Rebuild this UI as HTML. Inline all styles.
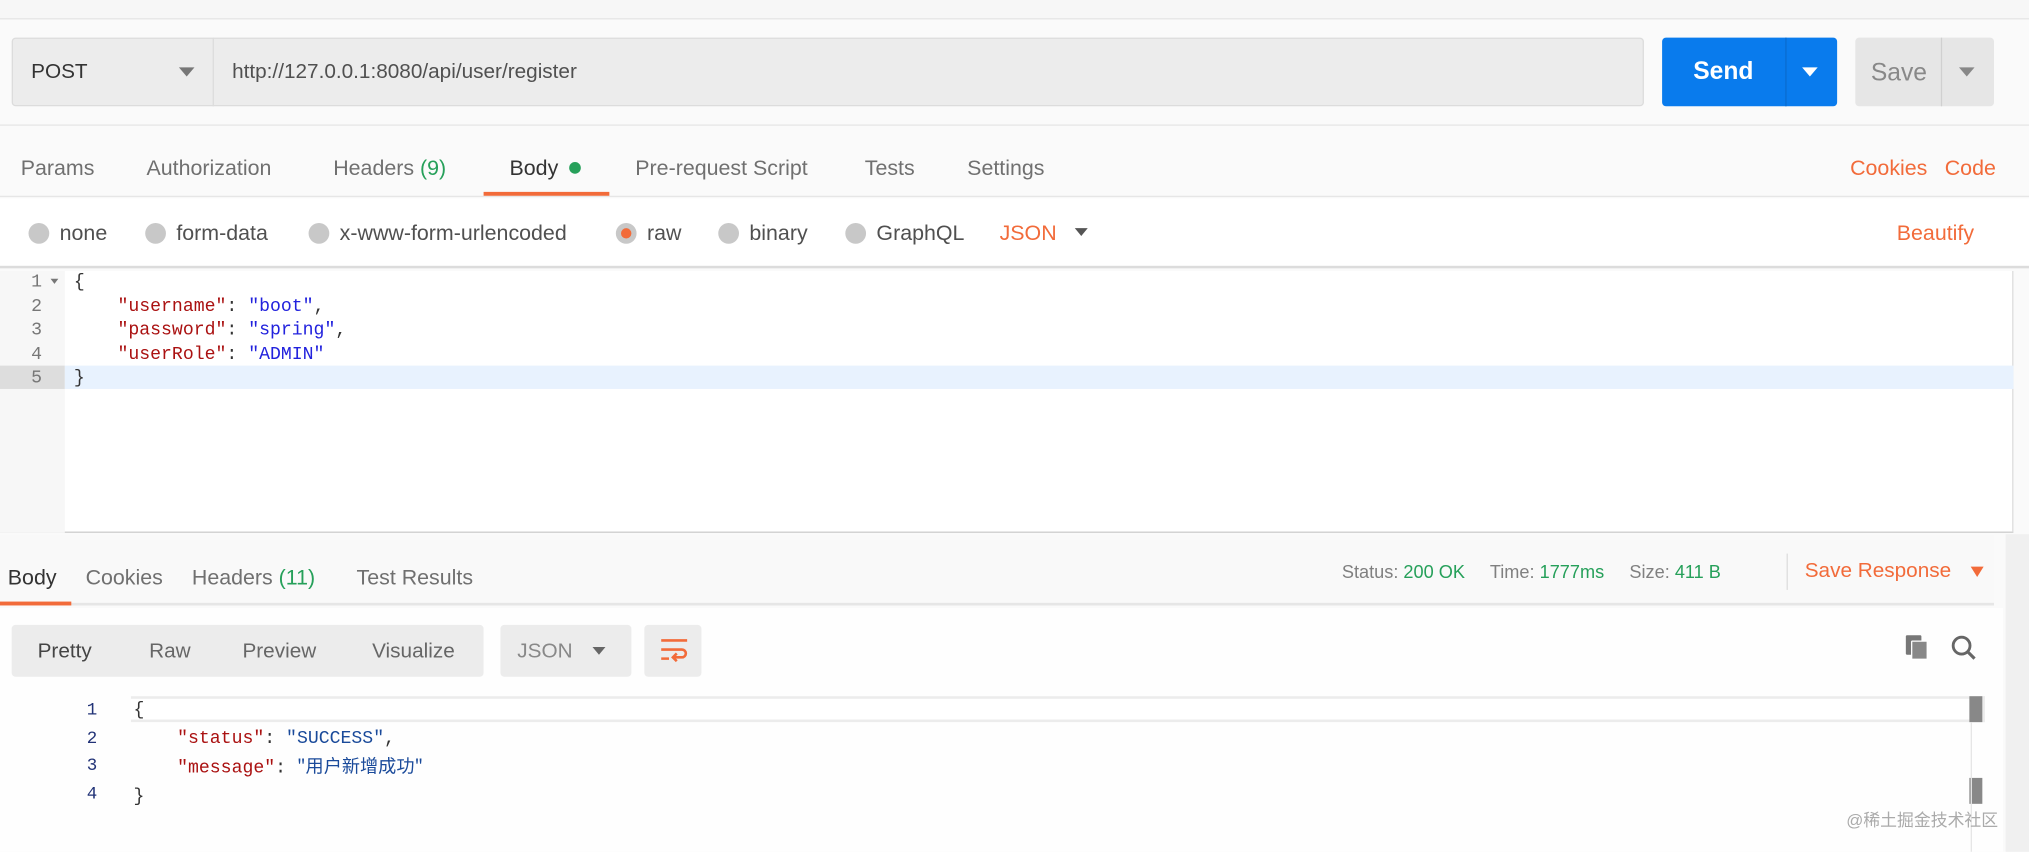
<!DOCTYPE html>
<html><head><meta charset="utf-8"><style>
*{margin:0;padding:0;box-sizing:border-box}
html,body{width:2029px;height:850px;overflow:hidden;background:#fff}
#w{position:absolute;left:0;top:0;width:1565px;height:657px;transform:scale(1.29649);transform-origin:0 0;font-family:"Liberation Sans","Noto Sans CJK SC",sans-serif;color:#505050;background:#fafafa}
.a{position:absolute;white-space:nowrap}
.tab{font-size:16.5px;color:#707070;top:121px}
.rad{font-size:16.5px;color:#505050;top:171px}
.dot{position:absolute;width:16px;height:16px;border-radius:50%;background:#c8c8c8;top:172px}
.mono{font-family:"Liberation Mono","DejaVu Sans Mono",monospace;font-size:14px}
.k{color:#a11}.s{color:#22d}
.ln{color:#777;font-family:"Liberation Mono",monospace;font-size:14px}
</style></head><body><div id="w">
<div class="a" style="left:0;top:0;width:1565px;height:15px;background:#f7f7f7;border-bottom:1px solid #e6e6e6"></div>
<div class="a" style="left:0;top:16px;width:1565px;height:81px;background:#fafafa;border-bottom:1px solid #e6e6e6"></div>
<div class="a" style="left:9px;top:29px;width:1259px;height:53px;background:#ececec;border:1px solid #dcdcdc;border-radius:3px"></div>
<div class="a" style="left:164px;top:29px;width:1px;height:53px;background:#dcdcdc"></div>
<div class="a" style="left:24px;top:47px;font-size:16px;color:#333">POST</div>
<div class="a" style="left:138px;top:52px;border-left:6px solid transparent;border-right:6px solid transparent;border-top:7px solid #777"></div>
<div class="a" style="left:179px;top:47px;font-size:16px;color:#505050">http://127.0.0.1:8080/api/user/register</div>
<div class="a" style="left:1282px;top:29px;width:135px;height:53px;background:#097bed;border-radius:3px"></div>
<div class="a" style="left:1377px;top:29px;width:1px;height:53px;background:#0a6cd0"></div>
<div class="a" style="left:1306px;top:45px;font-size:19px;font-weight:bold;color:#fff">Send</div>
<div class="a" style="left:1390px;top:52px;border-left:6px solid transparent;border-right:6px solid transparent;border-top:7px solid #fff"></div>
<div class="a" style="left:1431px;top:29px;width:107px;height:53px;background:#e6e6e6;border-radius:3px"></div>
<div class="a" style="left:1497px;top:29px;width:1px;height:53px;background:#d0d0d0"></div>
<div class="a" style="left:1443px;top:46px;font-size:19px;color:#888">Save</div>
<div class="a" style="left:1511px;top:52px;border-left:6px solid transparent;border-right:6px solid transparent;border-top:7px solid #888"></div>

<div class="a" style="left:0;top:98px;width:1565px;height:54px;background:#fafafa;border-bottom:1px solid #e6e6e6"></div>
<div class="a tab" style="left:16px">Params</div>
<div class="a tab" style="left:113px">Authorization</div>
<div class="a tab" style="left:257px">Headers <span style="color:#26a05a">(9)</span></div>
<div class="a tab" style="left:393px;color:#333">Body</div>
<div class="a" style="left:439px;top:125px;width:9px;height:9px;border-radius:50%;background:#26a05a"></div>
<div class="a" style="left:373px;top:148px;width:97px;height:3px;background:#f26b3a"></div>
<div class="a tab" style="left:490px">Pre-request Script</div>
<div class="a tab" style="left:667px">Tests</div>
<div class="a tab" style="left:746px">Settings</div>
<div class="a tab" style="left:1427px;color:#f26b3a">Cookies</div>
<div class="a tab" style="left:1500px;color:#f26b3a">Code</div>

<div class="a" style="left:0;top:153px;width:1565px;height:54px;background:#fff;border-bottom:2px solid #dcdcdc"></div>
<div class="dot" style="left:22px"></div><div class="a rad" style="left:46px">none</div>
<div class="dot" style="left:112px"></div><div class="a rad" style="left:136px">form-data</div>
<div class="dot" style="left:238px"></div><div class="a rad" style="left:262px">x-www-form-urlencoded</div>
<div class="dot" style="left:475px"></div><div class="a" style="left:479px;top:176px;width:8px;height:8px;border-radius:50%;background:#f26b3a"></div><div class="a rad" style="left:499px">raw</div>
<div class="dot" style="left:554px"></div><div class="a rad" style="left:578px">binary</div>
<div class="dot" style="left:652px"></div><div class="a rad" style="left:676px">GraphQL</div>
<div class="a rad" style="left:771px;color:#f26b3a">JSON</div>
<div class="a" style="left:829px;top:176px;border-left:5px solid transparent;border-right:5px solid transparent;border-top:6px solid #555"></div>
<div class="a rad" style="left:1463px;color:#f26b3a">Beautify</div>

<div class="a" style="left:0;top:209px;width:1553px;height:202px;background:#fff;border-right:1px solid #ddd;border-bottom:1px solid #ccc"></div>
<div class="a" style="left:0;top:209px;width:50px;height:202px;background:#f7f7f7"></div>
<div class="a" style="left:0;top:282px;width:50px;height:18px;background:#ddd"></div>
<div class="a" style="left:50px;top:282px;width:1503px;height:18px;background:#e8f2fe"></div>
<div class="a ln" style="left:24px;top:209px;line-height:18.5px">1<br>2<br>3<br>4<br>5</div>
<div class="a" style="left:39px;top:215px;border-left:3px solid transparent;border-right:3px solid transparent;border-top:4px solid #777"></div>
<div class="a mono" style="left:57px;top:209px;line-height:18.5px;color:#333">{<br>&nbsp;&nbsp;&nbsp;&nbsp;<span class="k">"username"</span>: <span class="s">"boot"</span>,<br>&nbsp;&nbsp;&nbsp;&nbsp;<span class="k">"password"</span>: <span class="s">"spring"</span>,<br>&nbsp;&nbsp;&nbsp;&nbsp;<span class="k">"userRole"</span>: <span class="s">"ADMIN"</span><br>}</div>

<div class="a" style="left:0;top:412px;width:1538px;height:55px;background:#f9f9f9;border-bottom:2px solid #e6e6e6"></div>
<div class="a tab" style="left:6px;top:437px;color:#333">Body</div>
<div class="a" style="left:0;top:464px;width:55px;height:3px;background:#f26b3a"></div>
<div class="a tab" style="left:66px;top:437px">Cookies</div>
<div class="a tab" style="left:148px;top:437px">Headers <span style="color:#26a05a">(11)</span></div>
<div class="a tab" style="left:275px;top:437px">Test Results</div>
<div class="a" style="left:1035px;top:433px;font-size:14px;color:#808080">Status: <span style="color:#26a05a">200 OK</span>&nbsp;&nbsp;&nbsp;&nbsp; Time: <span style="color:#26a05a">1777ms</span>&nbsp;&nbsp;&nbsp;&nbsp; Size: <span style="color:#26a05a">411 B</span></div>
<div class="a" style="left:1378px;top:427px;width:1px;height:28px;background:#ddd"></div>
<div class="a" style="left:1392px;top:432px;font-size:16px;color:#f26b3a">Save Response</div>
<div class="a" style="left:1520px;top:437px;border-left:5px solid transparent;border-right:5px solid transparent;border-top:8px solid #f26b3a"></div>

<div class="a" style="left:0;top:469px;width:1545px;height:188px;background:#fefefe"></div>
<div class="a" style="left:9px;top:482px;width:364px;height:40px;background:#ececec;border-radius:3px"></div>
<div class="a" style="left:29px;top:494px;font-size:16px;color:#444">Pretty</div>
<div class="a" style="left:115px;top:494px;font-size:16px;color:#666">Raw</div>
<div class="a" style="left:187px;top:494px;font-size:16px;color:#666">Preview</div>
<div class="a" style="left:287px;top:494px;font-size:16px;color:#666">Visualize</div>
<div class="a" style="left:386px;top:482px;width:101px;height:40px;background:#ececec;border-radius:3px"></div>
<div class="a" style="left:399px;top:494px;font-size:16px;color:#888">JSON</div>
<div class="a" style="left:457px;top:499px;border-left:5px solid transparent;border-right:5px solid transparent;border-top:6px solid #666"></div>
<div class="a" style="left:497px;top:482px;width:44px;height:40px;background:#ececec;border-radius:3px"></div>
<svg class="a" style="left:508px;top:491px" width="24" height="22" viewBox="0 0 24 22"><g stroke="#f26b3a" stroke-width="2" fill="none"><path d="M2 3h20M2 10h16a3 3 0 0 1 0 6h-6M2 17h6"/><path d="M14 13l-3 3 3 3"/></g></svg>
<div class="a" style="left:1470px;top:490px;width:12px;height:15px;background:#777;border-radius:1px"></div>
<div class="a" style="left:1474px;top:494px;width:13px;height:15px;background:#888;border-radius:1px;border:1px solid #fff"></div>
<svg class="a" style="left:1505px;top:490px" width="20" height="20" viewBox="0 0 20 20"><circle cx="8" cy="8" r="6.5" stroke="#666" stroke-width="2.2" fill="none"/><path d="M13 13l5 5" stroke="#666" stroke-width="2.4"/></svg>

<div class="a" style="left:101px;top:537px;width:1430px;height:20px;border:2px solid #ececec;border-left:none;background:#fff"></div>
<div class="a" style="left:1519px;top:537px;width:10px;height:20px;background:#888"></div>
<div class="a" style="left:1519px;top:600px;width:10px;height:20px;background:#888"></div>
<div class="a" style="left:1520px;top:557px;width:1px;height:100px;background:#e6e6e6"></div>
<div class="a" style="left:1547px;top:412px;width:18px;height:245px;background:#f0f0f0"></div>
<div class="a" style="left:60px;top:538px;line-height:21.5px;font-family:'Liberation Mono',monospace;font-size:13.5px;color:#237;text-align:right;width:15px">1<br>2<br>3<br>4</div>
<div class="a mono" style="left:103px;top:538px;line-height:21.5px;color:#333">{<br>&nbsp;&nbsp;&nbsp;&nbsp;<span class="k">"status"</span>: <span style="color:#1a4a9a">"SUCCESS"</span>,<br>&nbsp;&nbsp;&nbsp;&nbsp;<span class="k">"message"</span>: <span style="color:#1a4a9a;font-family:'Noto Sans CJK SC',monospace">"用户新增成功"</span><br>}</div>
<div class="a" style="left:1424px;top:622px;font-size:13px;color:#aaa;font-family:'Liberation Sans','Noto Sans CJK SC',sans-serif">@稀土掘金技术社区</div>
</div></body></html>
